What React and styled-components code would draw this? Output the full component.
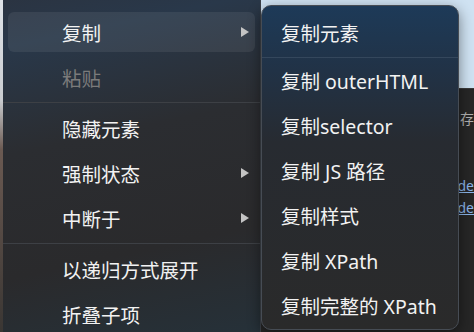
import React from 'react';
import styled, { createGlobalStyle } from 'styled-components';

const GlobalStyle = createGlobalStyle`
  html, body { margin: 0; padding: 0; }
  body {
    width: 474px;
    height: 332px;
    overflow: hidden;
    background: #262626;
    font-family: "Noto Sans", "Noto Sans CJK SC", sans-serif;
  }
`;

const Page = styled.div`
  position: relative;
  width: 474px;
  height: 332px;
  overflow: hidden;
  display: grid;
  grid-template-columns: 3px 1fr;
`;

const LeftStrip = styled.div`
  background: linear-gradient(180deg, #dfe3e8 0%, #c9ccd0 30%, #6b5a52 45%, #3a3633 100%);
`;

const RightPane = styled.div`
  display: grid;
  grid-template-rows: 88px 1fr;
`;

const TopBand = styled.div`
  background: #cfe2f2;
`;

const DevPanel = styled.div`
  background: #262626;
  border-top: 1px solid #3a3a3a;
  display: flex;
  flex-direction: column;
  align-items: flex-end;
  padding-top: 19px;
  font-size: 14px;
`;

const PanelText = styled.div`
  height: 22px;
  line-height: 22px;
  margin-bottom: ${(p) => p.gap || 0}px;
  color: ${(p) => (p.link ? '#8ab4e8' : '#b0b0b0')};
  text-decoration: ${(p) => (p.link ? 'underline' : 'none')};
  white-space: nowrap;
`;

const Menu = styled.div`
  position: absolute;
  left: 3px;
  top: -10px;
  width: 258px;
  height: 360px;
  padding-top: 22px;
  box-sizing: border-box;
  border-right: 1px solid #3c4148;
  background: linear-gradient(168deg, #2b3340 0%, #29384a 14%, #2b2d31 40%, #2a2a2c 70%, #25323b 100%);
  display: flex;
  flex-direction: column;
  gap: 5px;
`;

const SubMenu = styled.div`
  position: absolute;
  left: 261px;
  top: 5px;
  width: 198px;
  height: 325px;
  box-sizing: border-box;
  padding-top: 6px;
  border: 1px solid #464c54;
  border-radius: 10px;
  background: linear-gradient(180deg, #1d3a58 0%, #213246 20%, #272b31 42%, #2a2a2a 100%);
  box-shadow: 0 4px 14px rgba(0, 0, 0, 0.45);
  display: flex;
  flex-direction: column;
  gap: 5px;
`;

const Item = styled.div`
  position: relative;
  height: 40px;
  margin: 0 ${(p) => p.inset}px;
  padding-left: ${(p) => p.pad}px;
  border-radius: 6px;
  display: flex;
  align-items: center;
  font-size: 19.5px;
  color: ${(p) => (p.disabled ? '#7b7b7b' : '#f2f2f2')};
  background: ${(p) => (p.active ? 'rgba(255,255,255,0.07)' : 'transparent')};
  white-space: nowrap;
  flex-shrink: 0;
`;

const Arrow = styled.span`
  position: absolute;
  right: 6px;
  top: 50%;
  margin-top: -5px;
  width: 0;
  height: 0;
  border-top: 5px solid transparent;
  border-bottom: 5px solid transparent;
  border-left: 8px solid #c4c4c4;
`;

const Separator = styled.div`
  height: 1px;
  flex-shrink: 0;
  margin-bottom: ${(p) => p.pull || 0}px;
  background: ${(p) => p.color || '#3d4045'};
`;

const mainItems = [
  { label: '复制', sub: true, active: true },
  { label: '粘贴', disabled: true },
  'sep',
  { label: '隐藏元素' },
  { label: '强制状态', sub: true },
  { label: '中断于', sub: true },
  'sep',
  { label: '以递归方式展开' },
  { label: '折叠子项' },
];

const subItems = [
  '复制元素',
  'sep',
  '复制 outerHTML',
  '复制selector',
  '复制 JS 路径',
  '复制样式',
  '复制 XPath',
  '复制完整的 XPath',
];

export default function App() {
  return (
    <>
      <GlobalStyle />
      <Page>
        <LeftStrip />
        <RightPane>
          <TopBand />
          <DevPanel>
            <PanelText gap={45}>存</PanelText>
            <PanelText link>de</PanelText>
            <PanelText link>de</PanelText>
          </DevPanel>
        </RightPane>

        <Menu>
          {mainItems.map((it, i) =>
            it === 'sep' ? (
              <Separator key={i} />
            ) : (
              <Item key={i} inset={5} pad={54} active={it.active} disabled={it.disabled}>
                {it.label}
                {it.sub && <Arrow />}
              </Item>
            )
          )}
        </Menu>

        <SubMenu>
          {subItems.map((label, i) =>
            label === 'sep' ? (
              <Separator key={i} color="#34475c" pull={-3} />
            ) : (
              <Item key={i} inset={4} pad={15}>
                {label}
              </Item>
            )
          )}
        </SubMenu>
      </Page>
    </>
  );
}
